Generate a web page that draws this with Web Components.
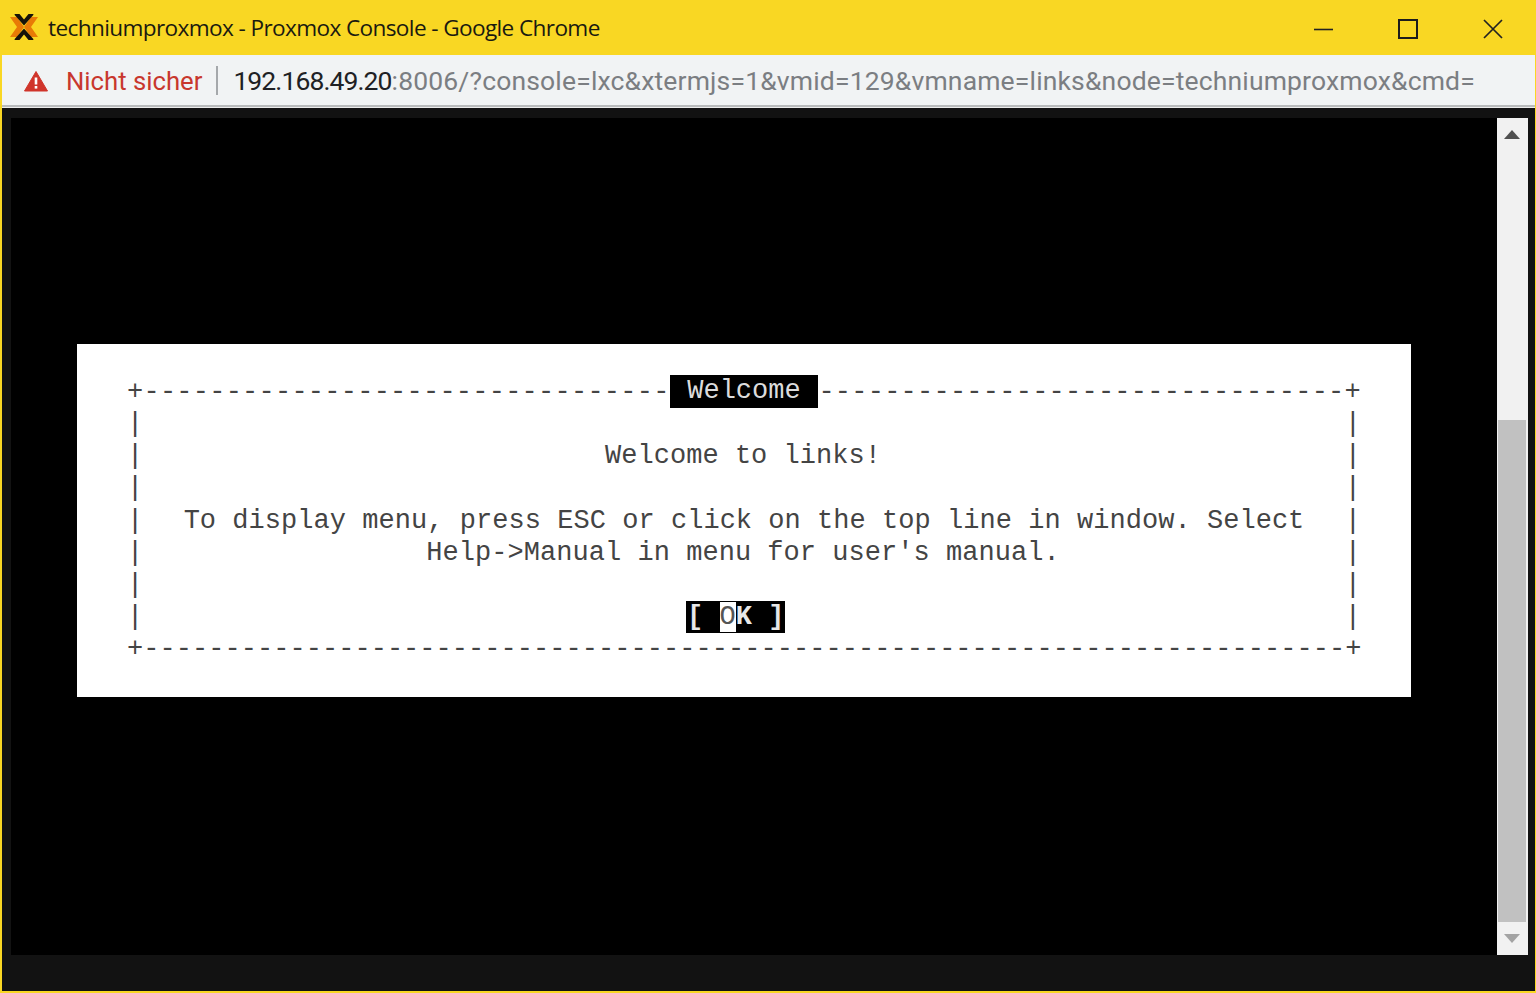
<!DOCTYPE html>
<html lang="de">
<head>
<meta charset="utf-8">
<title>techniumproxmox - Proxmox Console</title>
<style>
html, body { margin: 0; padding: 0; height: 993px; overflow: hidden; background: #f9d723; }
</style>
</head>
<body>
<console-window>
    <title-bar slot="title" label="techniumproxmox - Proxmox Console - Google Chrome"></title-bar>
    <address-bar slot="address" host="192.168.49.20" rest=":8006/?console=lxc&amp;xtermjs=1&amp;vmid=129&amp;vmname=links&amp;node=techniumproxmox&amp;cmd="></address-bar>
    <xterm-view>
        <links-dialog heading="Welcome">
            <dialog-row></dialog-row>
            <dialog-row shift="-2">Welcome to links!</dialog-row>
            <dialog-row></dialog-row>
            <dialog-row>To display menu, press ESC or click on the top line in window. Select</dialog-row>
            <dialog-row shift="-2">Help-&gt;Manual in menu for user's manual.</dialog-row>
            <dialog-row></dialog-row>
            <dialog-row><ok-button></ok-button></dialog-row>
        </links-dialog>
    </xterm-view>
</console-window>

<script>
/* Outer frame: yellow border, then title bar, address bar, terminal */
class ConsoleWindow extends HTMLElement {
    constructor() {
        super();
        this.attachShadow({ mode: 'open' });
        this.shadowRoot.innerHTML = `
<style>
:host {
    display: flex;
    flex-direction: column;
    height: 993px;
    box-sizing: border-box;
    padding: 0 1px 2px 2px;
    background: #f9d723;
}
.body { flex: 1; display: flex; min-height: 0; }
</style>
<slot name="title"></slot>
<slot name="address"></slot>
<div class="body"><slot></slot></div>`;
    }
}

class TitleBar extends HTMLElement {
    constructor() {
        super();
        this.attachShadow({ mode: 'open' });
    }

    connectedCallback() {
        this.shadowRoot.innerHTML = `
<style>
:host {
    display: flex;
    align-items: center;
    height: 55px;
    margin: 0 -1px 0 -2px;
    background: #f9d723;
    color: #1a1a10;
    font: 400 22.6px "Open Sans", "Noto Sans", sans-serif;
    letter-spacing: -0.62px;
}
.logo { width: 28px; height: 28px; margin: 0 0 2px 10px; flex-shrink: 0; }
.label { margin-left: 10px; flex: 1; white-space: nowrap; }
.controls { display: flex; margin-right: 1px; }
.controls svg { width: 85px; height: 55px; display: block; }
</style>
<svg class="logo" viewBox="0 0 28 28">
    <path d="M0 4h7L14 14 7 24H0l7-10z" fill="#e87b06"/>
    <path d="M28 4h-7L14 14l7 10h7l-7-10z" fill="#e87b06"/>
    <path d="M5 1q-.8 0-.3 1L14 12.500 23.300 2q.5-1-.3-1h-4.500L14 6.500 9.500 1z" fill="#15120a"/>
    <path d="M5 27q-.8 0-.3-1L14 15.500 23.300 26q.5 1-.3 1h-4.500L14 21.500 9.500 27z" fill="#15120a"/>
</svg>
<span class="label">${this.getAttribute('label')}</span>
<div class="controls">
    <svg viewBox="0 0 85 55"><path d="M34 29.500h19" stroke="#222" stroke-width="1.600"/></svg>
    <svg viewBox="0 0 85 55"><rect x="34" y="20" width="18" height="18" fill="none" stroke="#1c1c1c" stroke-width="2"/></svg>
    <svg viewBox="0 0 85 55"><path d="M34 20l18 18M52 20L34 38" stroke="#222" stroke-width="1.700" fill="none"/></svg>
</div>`;
    }
}

class AddressBar extends HTMLElement {
    constructor() {
        super();
        this.attachShadow({ mode: 'open' });
    }

    connectedCallback() {
        const rest = this.getAttribute('rest').replace(/&/g, '&amp;');
        this.shadowRoot.innerHTML = `
<style>
:host {
    display: flex;
    align-items: center;
    box-sizing: border-box;
    height: 53px;
    padding-top: 1px;
    background: #f1f3f4;
    border-bottom: 3px solid #b9bbbc;
    font: 400 26.5px Roboto, "Noto Sans", sans-serif;
    white-space: nowrap;
}
.warn { width: 24px; height: 22px; margin-left: 22px; flex-shrink: 0; }
.state { margin-left: 18px; color: #c8372d; font-size: 25.7px; }
.sep { width: 2px; height: 29px; margin: 0 15px 0 14px; background: #a5a8ab; }
.host { color: #202124; letter-spacing: -0.9px; }
.rest { color: #7b7e82; letter-spacing: 0.16px; }
</style>
<svg class="warn" viewBox="0 0 24 22">
    <path d="M12 1.500L23.500 21H.5z" fill="#d0352b" stroke="#d0352b" stroke-width="1" stroke-linejoin="round"/>
    <rect x="10.700" y="7.500" width="2.600" height="7" fill="#fff"/>
    <rect x="10.700" y="16" width="2.600" height="2.600" fill="#fff"/>
</svg>
<span class="state">Nicht sicher</span>
<span class="sep"></span>
<span><span class="host">${this.getAttribute('host')}</span><span class="rest">${rest}</span></span>`;
    }
}

/* Terminal area: dark margin, black screen, scrollbar on the right */
class XtermView extends HTMLElement {
    constructor() {
        super();
        this.attachShadow({ mode: 'open' });
        this.shadowRoot.innerHTML = `
<style>
:host {
    flex: 1;
    display: grid;
    grid-template-columns: 1fr 31px;
    box-sizing: border-box;
    padding: 10px 7px 36px 9px;
    background: #121212;
    border-top: 1px solid #ececec;
    margin-top: -1px;
}
.screen { background: #000; padding-top: 226px; padding-left: 66px; min-width: 0; }
</style>
<div class="screen"><slot></slot></div>
<term-scrollbar></term-scrollbar>`;
    }
}

class TermScrollbar extends HTMLElement {
    constructor() {
        super();
        this.attachShadow({ mode: 'open' });
        this.shadowRoot.innerHTML = `
<style>
:host {
    display: flex;
    flex-direction: column;
    align-items: center;
    background: #f1f1f1;
    padding: 0 2px 0 1px;
}
.btn { height: 33px; width: 100%; display: flex; align-items: center; justify-content: center; flex-shrink: 0; }
.track { flex: 1; width: 100%; display: flex; flex-direction: column; }
.gap { flex: 0 0 269px; }
.thumb { flex: 1; background: #c1c1c1; }
svg { width: 16px; height: 9px; display: block; }
</style>
<div class="btn"><svg viewBox="0 0 16 9"><path d="M8 0l8 9H0z" fill="#505050"/></svg></div>
<div class="track"><div class="gap"></div><div class="thumb"></div></div>
<div class="btn"><svg viewBox="0 0 16 9"><path d="M8 9L0 0h16z" fill="#a3a3a3"/></svg></div>`;
    }
}

/* The links welcome box, drawn in terminal cells */
class LinksDialog extends HTMLElement {
    constructor() {
        super();
        this.attachShadow({ mode: 'open' });
    }

    connectedCallback() {
        const rule = '-'.repeat(32);
        this.shadowRoot.innerHTML = `
<style>
:host {
    display: block;
    box-sizing: border-box;
    width: 1334px;
    height: 353px;
    padding: 32px 50px 0;
    background: #fff;
    color: #444;
    font: 400 27px/32.125px "Liberation Mono", monospace;
    letter-spacing: 0.04px;
}
.edge { display: flex; justify-content: space-between; height: 32.125px; white-space: pre; }
.top span:first-child, .top span:last-child { letter-spacing: 0.24px; }
.title { background: #000; color: #dcdcdc; width: 148px; text-align: center; height: 33px; margin-top: -1px; }
</style>
<div class="edge top"><span>+${rule}</span><span class="title">${this.getAttribute('heading')}</span><span>${rule}+</span></div>
<slot></slot>
<div class="edge"><span>+${'-'.repeat(74)}+</span></div>`;
    }
}

class DialogRow extends HTMLElement {
    constructor() {
        super();
        this.attachShadow({ mode: 'open' });
    }

    connectedCallback() {
        const shift = this.getAttribute('shift') || 0;
        this.shadowRoot.innerHTML = `
<style>
:host { display: flex; height: 32.125px; justify-content: space-between; }
.mid { flex: 1; display: flex; justify-content: center; margin-left: ${shift}px; }
</style>
<span>|</span><span class="mid"><slot></slot></span><span>|</span>`;
    }
}

class OkButton extends HTMLElement {
    constructor() {
        super();
        this.attachShadow({ mode: 'open' });
        this.shadowRoot.innerHTML = `
<style>
:host {
    display: inline-block;
    box-sizing: border-box;
    width: 99px;
    height: 32px;
    margin-right: 17px;
    padding-left: 1px;
    background: #000;
    color: #e8e8e8;
    font-weight: 700;
}
.text { white-space: pre; }
.cursor { background: #fff; color: #555; font-weight: 400; }
</style>
<span class="text">[ <span class="cursor">O</span>K ]</span>`;
    }
}

customElements.define('console-window', ConsoleWindow);
customElements.define('title-bar', TitleBar);
customElements.define('address-bar', AddressBar);
customElements.define('xterm-view', XtermView);
customElements.define('term-scrollbar', TermScrollbar);
customElements.define('links-dialog', LinksDialog);
customElements.define('dialog-row', DialogRow);
customElements.define('ok-button', OkButton);
</script>
</body>
</html>
